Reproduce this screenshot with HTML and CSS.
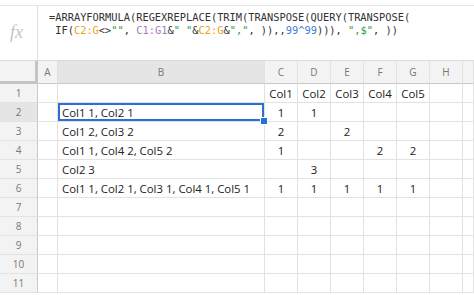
FILE: index.html
```html
<!DOCTYPE html>
<html lang="en">
<head>
  <meta charset="UTF-8">
  <title>Sheet</title>
  <link rel="stylesheet" href="styles.css">
</head>
<body>
  <div class="formula-bar">
    <div class="fx">fx</div>
    <div class="formula">
      <div class="line">=ARRAYFORMULA(REGEXREPLACE(TRIM(TRANSPOSE(QUERY(TRANSPOSE(</div>
      <div class="line"> IF(<span class="ref-a">C2:G</span>&lt;&gt;<span class="str">""</span>, <span class="ref-b">C1:G1</span>&amp;<span class="str">" "</span>&amp;<span class="ref-a">C2:G</span>&amp;<span class="str">","</span>, )),,<span class="num">99^99</span>))), <span class="str">",$"</span>, ))</div>
    </div>
  </div>

  <div class="grid">
    <div class="corner"></div>
    <div class="col-head">A</div>
    <div class="col-head active">B</div>
    <div class="col-head">C</div>
    <div class="col-head">D</div>
    <div class="col-head">E</div>
    <div class="col-head">F</div>
    <div class="col-head">G</div>
    <div class="col-head">H</div>
    <div class="col-head"></div>

    <div class="row-head">1</div>
    <div class="cell"></div><div class="cell"></div>
    <div class="cell num-cell">Col1</div><div class="cell num-cell">Col2</div><div class="cell num-cell">Col3</div><div class="cell num-cell">Col4</div><div class="cell num-cell">Col5</div>
    <div class="cell"></div><div class="cell"></div>

    <div class="row-head active">2</div>
    <div class="cell"></div><div class="cell selected">Col1 1, Col2 1</div>
    <div class="cell num-cell">1</div><div class="cell num-cell">1</div><div class="cell"></div><div class="cell"></div><div class="cell"></div>
    <div class="cell"></div><div class="cell"></div>

    <div class="row-head">3</div>
    <div class="cell"></div><div class="cell">Col1 2, Col3 2</div>
    <div class="cell num-cell">2</div><div class="cell"></div><div class="cell num-cell">2</div><div class="cell"></div><div class="cell"></div>
    <div class="cell"></div><div class="cell"></div>

    <div class="row-head">4</div>
    <div class="cell"></div><div class="cell">Col1 1, Col4 2, Col5 2</div>
    <div class="cell num-cell">1</div><div class="cell"></div><div class="cell"></div><div class="cell num-cell">2</div><div class="cell num-cell">2</div>
    <div class="cell"></div><div class="cell"></div>

    <div class="row-head">5</div>
    <div class="cell"></div><div class="cell">Col2 3</div>
    <div class="cell"></div><div class="cell num-cell">3</div><div class="cell"></div><div class="cell"></div><div class="cell"></div>
    <div class="cell"></div><div class="cell"></div>

    <div class="row-head">6</div>
    <div class="cell"></div><div class="cell">Col1 1, Col2 1, Col3 1, Col4 1, Col5 1</div>
    <div class="cell num-cell">1</div><div class="cell num-cell">1</div><div class="cell num-cell">1</div><div class="cell num-cell">1</div><div class="cell num-cell">1</div>
    <div class="cell"></div><div class="cell"></div>

    <div class="row-head">7</div>
    <div class="cell"></div><div class="cell"></div><div class="cell"></div><div class="cell"></div><div class="cell"></div><div class="cell"></div><div class="cell"></div><div class="cell"></div><div class="cell"></div>
    <div class="row-head">8</div>
    <div class="cell"></div><div class="cell"></div><div class="cell"></div><div class="cell"></div><div class="cell"></div><div class="cell"></div><div class="cell"></div><div class="cell"></div><div class="cell"></div>
    <div class="row-head">9</div>
    <div class="cell"></div><div class="cell"></div><div class="cell"></div><div class="cell"></div><div class="cell"></div><div class="cell"></div><div class="cell"></div><div class="cell"></div><div class="cell"></div>
    <div class="row-head">10</div>
    <div class="cell"></div><div class="cell"></div><div class="cell"></div><div class="cell"></div><div class="cell"></div><div class="cell"></div><div class="cell"></div><div class="cell"></div><div class="cell"></div>
    <div class="row-head">11</div>
    <div class="cell"></div><div class="cell"></div><div class="cell"></div><div class="cell"></div><div class="cell"></div><div class="cell"></div><div class="cell"></div><div class="cell"></div><div class="cell"></div>
  </div>
</body>
</html>
```

FILE: styles.css
```css
body {
  margin: 0;
  width: 474px;
  height: 295px;
  overflow: hidden;
  background: #fff;
  font-family: "Open Sans", Arial, sans-serif;
  color: #222;
}
.formula-bar {
  display: flex;
  margin-top: 5px;
  height: 54px;
  border-top: 1px solid #e6e6e6;
  border-bottom: 1px solid #dadada;
}
.fx {
  width: 38px;
  flex-shrink: 0;
  border-right: 1px solid #e0e0e0;
  color: #c4c4c4;
  font-family: "Liberation Serif", serif;
  font-style: italic;
  font-size: 18px;
  padding: 16px 0 0 10px;
  box-sizing: border-box;
}
.formula {
  padding: 5px 0 0 11px;
  font-family: "DejaVu Sans Mono", "Liberation Mono", monospace;
  font-size: 10.35px;
  line-height: 13px;
  color: #333;
}
.line {
  white-space: pre;
}
.ref-a { color: #e8a21b; }
.ref-b { color: #a57ab8; }
.str { color: #2f9a46; }
.num { color: #3f7dd6; }

.grid {
  display: grid;
  grid-template-columns: 38px 20px 207px repeat(6, 33px) 1fr;
  grid-template-rows: 23px repeat(11, 19px);
  font-size: 11.4px;
}
.grid > div {
  box-sizing: border-box;
  border-right: 1px solid #e2e2e2;
  border-bottom: 1px solid #e2e2e2;
  display: flex;
  align-items: center;
  white-space: nowrap;
}
.corner {
  background: #f3f3f3;
  border-right: 3px solid #c4c4c4 !important;
  border-bottom: 3px solid #c4c4c4 !important;
}
.col-head {
  background: #f3f3f3;
  color: #777;
  font-size: 10px;
  justify-content: center;
  border-bottom: 1px solid #c9c9c9 !important;
}
.row-head {
  background: #f3f3f3;
  color: #777;
  font-size: 10px;
  justify-content: center;
  border-right: 1px solid #c9c9c9 !important;
}
.col-head.active,
.row-head.active {
  background: #e5e5e5;
}
.cell {
  padding: 0 4px;
  overflow: visible;
}
.num-cell {
  justify-content: center;
  padding: 0;
}
.selected {
  position: relative;
  box-shadow: inset 0 0 0 2px #2a6fd6;
}
.selected::after {
  content: "";
  position: absolute;
  right: -4px;
  bottom: -4px;
  width: 6px;
  height: 6px;
  background: #2a6fd6;
  border: 1px solid #fff;
  z-index: 2;
}
```
